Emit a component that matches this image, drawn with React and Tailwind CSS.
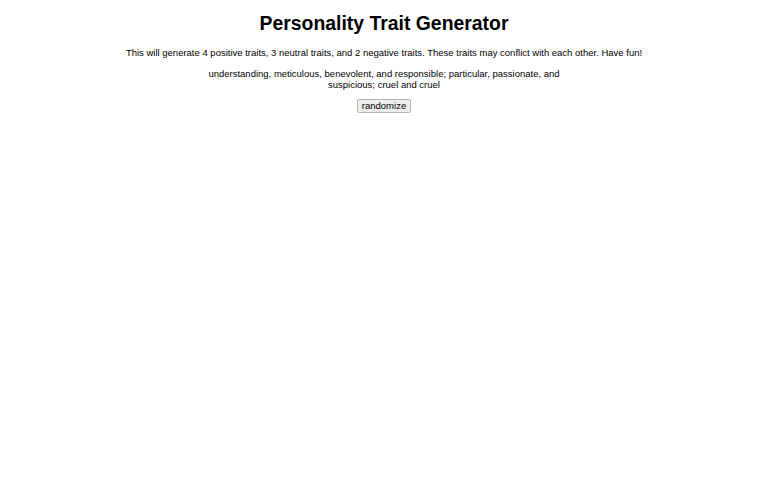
import { useState } from "react";

const positive = ["understanding", "meticulous", "benevolent", "responsible"];
const neutral = ["particular", "passionate", "suspicious"];
const negative = ["cruel", "cruel"];

function joinList(items) {
  if (items.length === 1) return items[0];
  if (items.length === 2) return `${items[0]} and ${items[1]}`;
  return `${items.slice(0, -1).join(", ")}, and ${items[items.length - 1]}`;
}

function App() {
  const [traits] = useState({ positive, neutral, negative });

  const line = [traits.positive, traits.neutral, traits.negative].map(joinList).join("; ");

  return (
    <div className="min-h-screen bg-white text-black font-['Liberation_Sans',Arial,sans-serif] text-center">
      <h1 className="pt-[12px] text-[19.4px] font-bold leading-[23px]">Personality Trait Generator</h1>
      <p className="mt-[12px] text-[9.5px] leading-[12px]">
        This will generate 4 positive traits, 3 neutral traits, and 2 negative traits. These traits may conflict with each other. Have fun!
      </p>
      <p className="mx-auto mt-[9px] max-w-[362px] text-[9.5px] leading-[11px]">{line}</p>
      <button className="mt-[9px] border border-[#b5b5b5] bg-[#efefef] px-[4px] text-[9.5px] leading-[12px] rounded-[2px]">
        randomize
      </button>
    </div>
  );
}

export default App;
